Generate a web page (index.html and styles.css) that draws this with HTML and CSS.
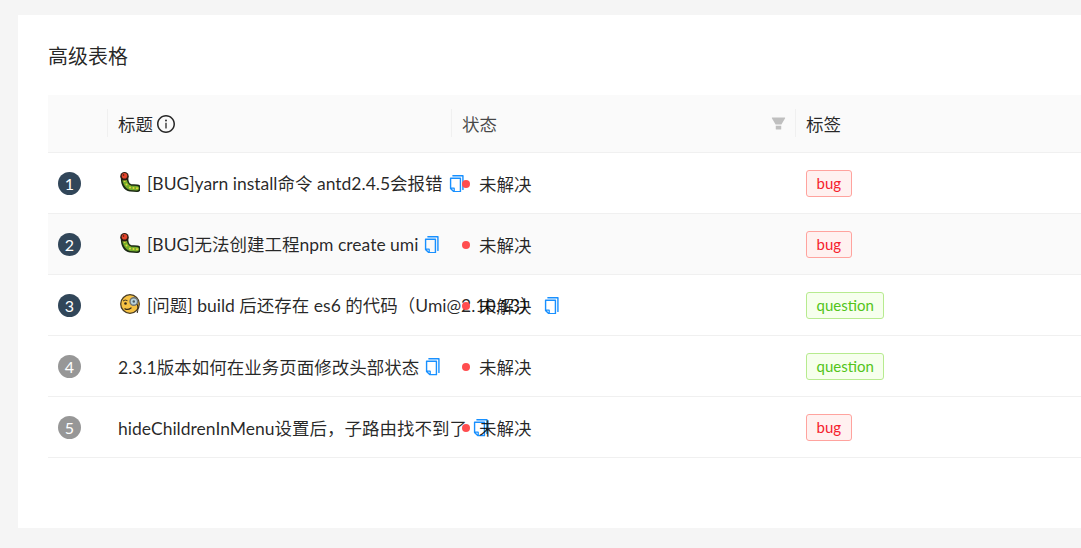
FILE: index.html
```html
<!DOCTYPE html>
<html lang="zh">
<head>
<meta charset="utf-8">
<title>高级表格</title>
<link rel="stylesheet" href="styles.css">
</head>
<body>
<svg class="defs" width="0" height="0" aria-hidden="true">
  <defs>
    <symbol id="copy" viewBox="64 64 896 896"><path fill="currentColor" d="M832 64H296c-4.400 0-8 3.600-8 8v56c0 4.400 3.600 8 8 8h496v688c0 4.400 3.600 8 8 8h56c4.400 0 8-3.600 8-8V96c0-17.700-14.300-32-32-32zM704 192H192c-17.700 0-32 14.300-32 32v530.700c0 8.500 3.400 16.600 9.400 22.600l173.300 173.300c2.200 2.200 4.700 4 7.400 5.500v1.900h4.200c3.500 1.300 7.200 2 11 2H704c17.700 0 32-14.300 32-32V224c0-17.700-14.300-32-32-32zM350 856.200L263.900 770H350v86.200zM664 888H414V746c0-22.100-17.900-40-40-40H232V264h432v624z"/></symbol>
    <symbol id="bug" viewBox="0 0 20 20">
      <path d="M4.500 5C4.500 10 6 15 10.500 15.800L17 16.200" fill="none" stroke="#1b2a14" stroke-width="7.500" stroke-linecap="round" stroke-linejoin="round"/>
      <path d="M4.500 6C4.500 10 6.500 14.800 10.500 15.800L17 16.200" fill="none" stroke="#74ad2b" stroke-width="4.500" stroke-linecap="round"/>
      <circle cx="4.700" cy="9" r="1" fill="#e6d53c"/><circle cx="6.500" cy="12.500" r="1" fill="#e6d53c"/><circle cx="10" cy="15.500" r="1" fill="#e6d53c"/><circle cx="13.500" cy="16" r="1" fill="#e6d53c"/><circle cx="17" cy="16.300" r="1" fill="#e6d53c"/>
      <circle cx="4.500" cy="4.200" r="4.200" fill="#2a1c12"/>
      <circle cx="4.500" cy="3.800" r="2.800" fill="#e2452c"/>
      <circle cx="3.500" cy="3" r=".8" fill="#3a1a10"/>
    </symbol>
    <symbol id="monocle" viewBox="0 0 20 20">
      <circle cx="10" cy="10" r="9.300" fill="#f6c244" stroke="#4a3d25" stroke-width="1.300"/>
      <path d="M3 7q2-1.800 4.500-.3" fill="none" stroke="#4a3d25" stroke-width="1"/>
      <circle cx="5.500" cy="9.500" r="1.300" fill="#33291a"/>
      <path d="M5 14.800q3 1.500 6-.8" fill="none" stroke="#33291a" stroke-width="1.300" stroke-linecap="round"/>
      <circle cx="13.800" cy="7.500" r="3.800" fill="#b9d3dc" stroke="#6d7478" stroke-width="1.400"/>
      <circle cx="13.800" cy="7.500" r="1.200" fill="#4a5a62"/>
      <path d="M17 10c1.200 2.500 1.200 6 .2 9" fill="none" stroke="#33291a" stroke-width="1"/>
    </symbol>
  </defs>
</svg>
<main class="card">
  <h1 class="title">高级表格</h1>
  <table class="table">
    <colgroup><col class="col-index"><col class="col-main"><col class="col-main"><col class="col-tag"></colgroup>
    <thead>
      <tr>
        <th></th>
        <th><span class="head-label">标题<svg class="info" viewBox="64 64 896 896"><path fill="currentColor" d="M512 64C264.600 64 64 264.600 64 512s200.600 448 448 448 448-200.600 448-448S759.400 64 512 64zm0 820c-205.400 0-372-166.600-372-372s166.600-372 372-372 372 166.600 372 372-166.600 372-372 372z"/><path fill="currentColor" d="M464 336a48 48 0 1 0 96 0 48 48 0 1 0-96 0zm72 112h-48c-4.400 0-8 3.600-8 8v272c0 4.400 3.600 8 8 8h48c4.400 0 8-3.600 8-8V456c0-4.400-3.600-8-8-8z"/></svg></span></th>
        <th><span class="head-status">状态</span><svg class="filter" viewBox="64 64 896 896"><path fill="currentColor" d="M349 838c0 17.700 14.200 32 31.800 32h262.400c17.600 0 31.800-14.300 31.800-32V642H349v196zm531.100-684H143.900c-24.500 0-39.800 26.700-27.500 48l221.300 376h348.800l221.300-376c12.100-21.300-3.200-48-27.700-48z"/></svg></th>
        <th>标签</th>
      </tr>
    </thead>
    <tbody>
      <tr>
        <td><span class="rank">1</span></td>
        <td><span class="issue"><svg class="emoji"><use href="#bug"/></svg>[BUG]yarn install命令 antd2.4.5会报错<svg class="copy"><use href="#copy"/></svg></span></td>
        <td><span class="status"><span class="dot"></span>未解决</span></td>
        <td><span class="tag tag-bug">bug</span></td>
      </tr>
      <tr class="alt">
        <td><span class="rank">2</span></td>
        <td><span class="issue"><svg class="emoji"><use href="#bug"/></svg>[BUG]无法创建工程npm create umi<svg class="copy"><use href="#copy"/></svg></span></td>
        <td><span class="status"><span class="dot"></span>未解决</span></td>
        <td><span class="tag tag-bug">bug</span></td>
      </tr>
      <tr>
        <td><span class="rank">3</span></td>
        <td><span class="issue"><svg class="emoji"><use href="#monocle"/></svg>[问题] build 后还存在 es6 的代码（Umi@2.10.13）<svg class="copy"><use href="#copy"/></svg></span></td>
        <td><span class="status"><span class="dot"></span>未解决</span></td>
        <td><span class="tag tag-question">question</span></td>
      </tr>
      <tr>
        <td><span class="rank rank-muted">4</span></td>
        <td><span class="issue">2.3.1版本如何在业务页面修改头部状态<svg class="copy"><use href="#copy"/></svg></span></td>
        <td><span class="status"><span class="dot"></span>未解决</span></td>
        <td><span class="tag tag-question">question</span></td>
      </tr>
      <tr>
        <td><span class="rank rank-muted">5</span></td>
        <td><span class="issue">hideChildrenInMenu设置后，子路由找不到了<svg class="copy"><use href="#copy"/></svg></span></td>
        <td><span class="status"><span class="dot"></span>未解决</span></td>
        <td><span class="tag tag-bug">bug</span></td>
      </tr>
    </tbody>
  </table>
</main>
</body>
</html>
```
FILE: styles.css
```css
html, body {
  margin: 0;
  height: 548px;
  overflow: hidden;
}

body {
  background: #f5f5f5;
  padding: 15px 0 0 18px;
  box-sizing: border-box;
  font-family: "Lato", "Noto Sans CJK SC", sans-serif;
  color: rgba(0, 0, 0, 0.85);
}

.defs {
  position: absolute;
}

.card {
  width: 1200px;
  height: 513px;
  background: #fff;
  padding: 0 30px;
  box-sizing: border-box;
}

.title {
  margin: 0;
  height: 80px;
  line-height: 83px;
  font-size: 20px;
  font-weight: 400;
}

.table {
  border-collapse: separate;
  border-spacing: 0;
  table-layout: fixed;
  width: 1140px;
  font-size: 17.5px;
}

.col-index { width: 60px; }
.col-main { width: 344px; }

thead tr {
  background: #fafafa;
}

th {
  position: relative;
  height: 57px;
  padding: 0 10px;
  border-bottom: 1px solid #f0f0f0;
  text-align: left;
  font-weight: 400;
  white-space: nowrap;
}

th + th::before {
  content: "";
  position: absolute;
  left: -1px;
  top: 14px;
  width: 1px;
  height: 28px;
  background: #f0f0f0;
}

.head-label {
  display: inline-flex;
  align-items: center;
  gap: 4px;
}

.head-status {
  color: rgba(0, 0, 0, 0.72);
}

.info {
  width: 18px;
  height: 18px;
  color: rgba(0, 0, 0, 0.85);
}

.filter {
  position: absolute;
  right: 10px;
  top: 21px;
  width: 15px;
  height: 15px;
  color: #bfbfbf;
}

td {
  height: 60px;
  padding: 0 10px;
  border-bottom: 1px solid #f0f0f0;
  white-space: nowrap;
  overflow: visible;
}

.alt {
  background: #fafafa;
}

.issue {
  display: inline-flex;
  align-items: center;
}

.emoji {
  width: 20px;
  height: 20px;
  margin: 0 7px 0 2px;
  flex: none;
}

.copy {
  width: 17.500px;
  height: 17.500px;
  margin: 2px 0 0 5px;
  color: #1890ff;
  flex: none;
}

.rank {
  display: flex;
  align-items: center;
  justify-content: center;
  width: 23px;
  height: 23px;
  border-radius: 50%;
  background: #314659;
  color: #fff;
  font-size: 16px;
}

.rank-muted {
  background: #979797;
}

.status {
  display: flex;
  align-items: center;
  gap: 9px;
}

.dot {
  width: 8px;
  height: 8px;
  margin-top: 2px;
  border-radius: 50%;
  background: #ff4d4f;
}

.tag {
  display: inline-block;
  height: 27px;
  line-height: 25px;
  padding: 0 9.500px;
  box-sizing: border-box;
  border: 1px solid;
  border-radius: 3px;
  font-size: 15px;
  vertical-align: middle;
}

.tag-bug {
  color: #f5222d;
  background: #fff1f0;
  border-color: #ffa39e;
}

.tag-question {
  color: #52c41a;
  background: #f6ffed;
  border-color: #b7eb8f;
}
```
